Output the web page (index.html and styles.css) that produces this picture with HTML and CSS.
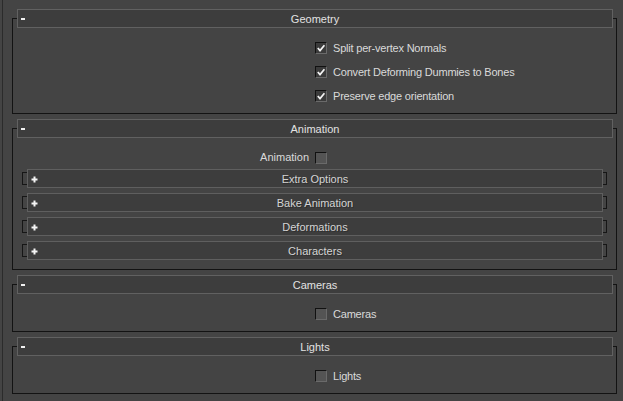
FILE: index.html
```html
<!DOCTYPE html>
<html>
<head>
<meta charset="utf-8">
<link rel="stylesheet" href="styles.css">
</head>
<body>
<div class="page">
  <section class="rollout">
    <div class="rhead"><span class="minus"></span><span class="title">Geometry</span></div>
    <div class="rbody opts">
      <div class="opt"><span class="cb on"><svg viewBox="0 0 10 10" width="10" height="10"><polyline points="1.8,5 4,7.6 8.4,2.2" /></svg></span><span>Split per-vertex Normals</span></div>
      <div class="opt"><span class="cb on"><svg viewBox="0 0 10 10" width="10" height="10"><polyline points="1.8,5 4,7.6 8.4,2.2" /></svg></span><span>Convert Deforming Dummies to Bones</span></div>
      <div class="opt"><span class="cb on"><svg viewBox="0 0 10 10" width="10" height="10"><polyline points="1.8,5 4,7.6 8.4,2.2" /></svg></span><span>Preserve edge orientation</span></div>
    </div>
  </section>

  <section class="rollout">
    <div class="rhead"><span class="minus"></span><span class="title">Animation</span></div>
    <div class="rbody anim">
      <div class="animrow"><span class="lbl">Animation</span><span class="cb"></span></div>
      <div class="subs">
        <div class="sub"><span class="brk l"></span><div class="shead"><svg class="plus" viewBox="0 0 7 7" width="7" height="7"><path d="M3.5 0.5V6.5M0.5 3.5H6.5"/></svg><span class="title">Extra Options</span></div><span class="brk r"></span></div>
        <div class="sub"><span class="brk l"></span><div class="shead"><svg class="plus" viewBox="0 0 7 7" width="7" height="7"><path d="M3.5 0.5V6.5M0.5 3.5H6.5"/></svg><span class="title">Bake Animation</span></div><span class="brk r"></span></div>
        <div class="sub"><span class="brk l"></span><div class="shead"><svg class="plus" viewBox="0 0 7 7" width="7" height="7"><path d="M3.5 0.5V6.5M0.5 3.5H6.5"/></svg><span class="title">Deformations</span></div><span class="brk r"></span></div>
        <div class="sub"><span class="brk l"></span><div class="shead"><svg class="plus" viewBox="0 0 7 7" width="7" height="7"><path d="M3.5 0.5V6.5M0.5 3.5H6.5"/></svg><span class="title">Characters</span></div><span class="brk r"></span></div>
      </div>
    </div>
  </section>

  <section class="rollout">
    <div class="rhead"><span class="minus"></span><span class="title">Cameras</span></div>
    <div class="rbody opts">
      <div class="opt"><span class="cb"></span><span>Cameras</span></div>
    </div>
  </section>

  <section class="rollout">
    <div class="rhead"><span class="minus"></span><span class="title">Lights</span></div>
    <div class="rbody opts">
      <div class="opt"><span class="cb"></span><span>Lights</span></div>
    </div>
  </section>
</div>
</body>
</html>
```

FILE: styles.css
```css
html, body {
  margin: 0;
  padding: 0;
  background: #444444;
}

body {
  font-family: "Liberation Sans", Arial, sans-serif;
  font-size: 11px;
  color: #dadada;
}

.page {
  box-sizing: border-box;
  min-height: 401px;
  margin-left: 2px;
  border-left: 1px solid #2b2b2b;
  padding: 18px 6px 1px 9px;
}

.rollout {
  border: 1px solid #131313;
  margin-bottom: 14px;
}

.rhead {
  box-sizing: border-box;
  height: 19px;
  margin: -10px 3px 0 4px;
  border: 1px solid #616161;
  background: #3d3d3d;
  display: grid;
  grid-template-columns: 1fr auto 1fr;
  align-items: center;
}

.minus {
  justify-self: start;
  width: 4px;
  height: 2px;
  margin-left: 3px;
  background: #f0f0f0;
}

.title {
  grid-column: 2;
  line-height: 17px;
  padding-top: 1px;
  color: #e2e2e2;
  white-space: nowrap;
}

.opts {
  padding: 8px 0 5px 302px;
}

.opt {
  height: 24px;
  display: flex;
  align-items: center;
  gap: 6px;
  letter-spacing: -0.2px;
}

.cb {
  box-sizing: border-box;
  width: 12px;
  height: 12px;
  border: 1px solid;
  border-color: #111111 #6a6a6a #6a6a6a #111111;
  background: #545454;
  display: flex;
  align-items: center;
  justify-content: center;
  flex: none;
}

.cb.on {
  background: #3b3b3b;
}

.cb svg polyline {
  fill: none;
  stroke: #f4f4f4;
  stroke-width: 1.7;
}

.anim {
  padding: 8px 0 9px 0;
}

.animrow {
  height: 23px;
  display: grid;
  grid-template-columns: 302px auto;
  align-items: center;
}

.lbl {
  text-align: right;
  padding-right: 6px;
  padding-bottom: 2px;
}

.subs {
  margin: 0 9px;
  display: flex;
  flex-direction: column;
  gap: 5px;
}

.sub {
  height: 19px;
  display: flex;
  align-items: center;
}

.brk {
  box-sizing: border-box;
  height: 13px;
  border: 1px solid #161616;
  flex: none;
}

.brk.l {
  width: 5px;
  border-right: none;
}

.brk.r {
  width: 4px;
  border-left: none;
}

.shead {
  flex: 1;
  box-sizing: border-box;
  height: 19px;
  border: 1px solid #5f5f5f;
  background: #3d3d3d;
  display: grid;
  grid-template-columns: 1fr auto 1fr;
  align-items: center;
}

.plus {
  justify-self: start;
  margin-left: 3px;
}

.plus path {
  stroke: #f4f4f4;
  stroke-width: 2;
  fill: none;
}

.shead .title {
  color: #d4d4d4;
  text-shadow: 1px 1px 0 #2e2e2e;
}
```
